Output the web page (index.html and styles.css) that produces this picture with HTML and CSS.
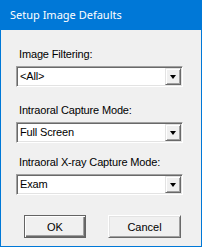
FILE: index.html
```html
<!DOCTYPE html>
<html lang="en">
<head>
    <meta charset="UTF-8">
    <title>Setup Image Defaults</title>
    <link rel="stylesheet" href="styles.css">
</head>
<body>
    <div class="dialog">
        <div class="title-bar">Setup Image Defaults</div>
        <div class="dialog-body">
            <div class="field field-first">
                <div class="field-label">Image Filtering:</div>
                <div class="combo">
                    <span class="combo-text">&lt;All&gt;</span>
                    <span class="combo-button"><span class="arrow"></span></span>
                </div>
            </div>
            <div class="field field-second">
                <div class="field-label">Intraoral Capture Mode:</div>
                <div class="combo">
                    <span class="combo-text">Full Screen</span>
                    <span class="combo-button"><span class="arrow"></span></span>
                </div>
            </div>
            <div class="field field-third">
                <div class="field-label">Intraoral X-ray Capture Mode:</div>
                <div class="combo">
                    <span class="combo-text">Exam</span>
                    <span class="combo-button"><span class="arrow"></span></span>
                </div>
            </div>
            <div class="button-row">
                <button class="btn btn-default">OK</button>
                <button class="btn btn-cancel">Cancel</button>
            </div>
        </div>
    </div>
</body>
</html>
```

FILE: styles.css
```css
body {
    margin: 0;
    background: #f0f0f0;
}

.dialog {
    width: 202px;
    height: 247px;
    box-sizing: border-box;
    padding: 0 1px 1px 1px;
    background: #0078d7;
    display: flex;
    flex-direction: column;
}

.title-bar {
    height: 30px;
    padding-left: 9px;
    color: #ffffff;
    font-family: "Noto Sans", "Open Sans", sans-serif;
    font-size: 11px;
    line-height: 30px;
}

.dialog-body {
    flex-grow: 1;
    background: #f0f0f0;
    display: flex;
    flex-direction: column;
    font-family: "Liberation Sans", Arial, sans-serif;
    font-size: 11px;
    letter-spacing: -0.15px;
    color: #000000;
}

.field {
    display: flex;
    flex-direction: column;
    gap: 5px;
    padding-left: 15px;
}

.field-first {
    margin-top: 18px;
}

.field-second {
    margin-top: 17px;
}

.field-third {
    margin-top: 13px;
}

.field-label {
    height: 13px;
    line-height: 13px;
    padding-left: 3px;
}

.combo {
    width: 167px;
    height: 21px;
    box-sizing: border-box;
    border: 1px solid;
    border-color: #a0a0a0 #ffffff #ffffff #a0a0a0;
    box-shadow: inset 1px 1px 0 #696969, inset -1px -1px 0 #e3e3e3;
    background: #ffffff;
    display: flex;
    align-items: stretch;
    padding: 1px;
}

.combo-text {
    flex-grow: 1;
    padding-left: 2px;
    line-height: 17px;
}

.combo-button {
    width: 16px;
    box-sizing: border-box;
    background: #f0f0f0;
    border: 1px solid;
    border-color: #e3e3e3 #696969 #696969 #e3e3e3;
    box-shadow: inset 1px 1px 0 #ffffff, inset -1px -1px 0 #a0a0a0;
    display: flex;
    align-items: center;
    justify-content: center;
}

.arrow {
    width: 0;
    height: 0;
    border-left: 3.5px solid transparent;
    border-right: 3.5px solid transparent;
    border-top: 4px solid #000000;
    margin-top: 1px;
}

.button-row {
    display: flex;
    margin-top: 20px;
    padding-left: 23px;
    gap: 22px;
}

.btn {
    height: 23px;
    padding: 0;
    background: #f0f0f0;
    font-family: "Liberation Sans", Arial, sans-serif;
    font-size: 11px;
    color: #000000;
    border: 1px solid;
}

.btn-default {
    width: 62px;
    border-color: #646464;
    box-shadow: inset 1px 1px 0 #ffffff, inset -1px -1px 0 #696969, inset -2px -2px 0 #a0a0a0;
}

.btn-cancel {
    width: 73px;
    border-color: #ffffff #696969 #696969 #ffffff;
    box-shadow: inset 1px 1px 0 #e3e3e3, inset -1px -1px 0 #a0a0a0;
}
```
